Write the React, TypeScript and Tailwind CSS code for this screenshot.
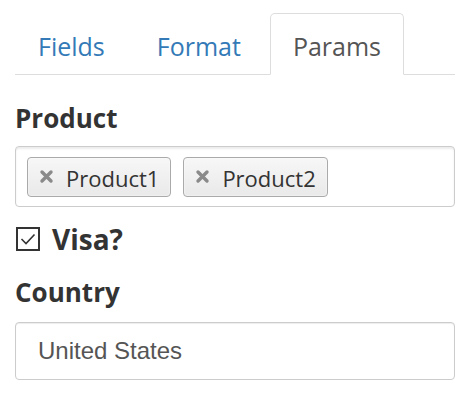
import React from "react";

const tabs = [
  { label: "Fields", active: false },
  { label: "Format", active: false },
  { label: "Params", active: true },
];

const products = ["Product1", "Product2"];

export default function App() {
  return (
    <div className="px-[15px] pt-[13px] bg-white font-['Open_Sans',sans-serif] text-[#333]">
      <ul className="flex border-b border-[#ddd]">
        {tabs.map((tab) => (
          <li key={tab.label} className="-mb-px mr-[6px]">
            <a
              className={`block h-[62px] px-[22px] pt-[14px] text-[25px] leading-[36px] rounded-t-[5px] border ${
                tab.active
                  ? "border-[#ddd] border-b-white bg-white text-[#555]"
                  : "border-transparent text-[#337ab7]"
              }`}
            >
              {tab.label}
            </a>
          </li>
        ))}
      </ul>

      <label className="block mt-[28px] text-[26px] leading-[30px] font-bold">Product</label>
      <div className="mt-[13px] h-[61px] flex items-center gap-[12px] px-[11px] border border-[#ccc] rounded-[4px] shadow-[inset_0_2px_2px_rgba(0,0,0,0.08)]">
        {products.map((p) => (
          <div
            key={p}
            className="h-[40px] flex items-center gap-[12px] pl-[11px] pr-[11px] border border-[#aaa] rounded-[4px] bg-gradient-to-b from-[#f7f7f7] to-[#e9e9e9] shadow-[inset_0_0_2px_#fff]"
          >
            <CloseIcon />
            <span className="text-[22px] leading-[30px] pt-[2px] text-[#333]">{p}</span>
          </div>
        ))}
      </div>

      <div className="mt-[18px] h-[28px] flex items-center gap-[12px]">
        <div className="w-[24px] h-[24px] ml-px border-2 border-[#333] bg-white flex items-center justify-center">
          <svg width="16" height="12" viewBox="0 0 16 12" fill="none">
            <path d="M1.5 6 L6 10.5 L14.5 1.5" stroke="#333" strokeWidth="1.6" />
          </svg>
        </div>
        <span className="text-[28px] leading-[28px] font-bold">Visa?</span>
      </div>

      <label className="block mt-[24px] text-[26px] leading-[30px] font-bold">Country</label>
      <div className="mt-[15px] h-[58px] flex items-center px-[22px] border border-[#ccc] rounded-[4px] shadow-[inset_0_1px_1px_rgba(0,0,0,0.075)]">
        <span className="font-['Liberation_Sans',Arial,sans-serif] text-[24px] text-[#555]">United States</span>
      </div>
    </div>
  );
}

const CloseIcon = () => {
  return (
    <svg width="15" height="15" viewBox="0 0 15 15" fill="none">
      <path d="M3 3 L12 12 M12 3 L3 12" stroke="#8a8a8a" strokeWidth="3.4" strokeLinecap="round" />
    </svg>
  );
};
